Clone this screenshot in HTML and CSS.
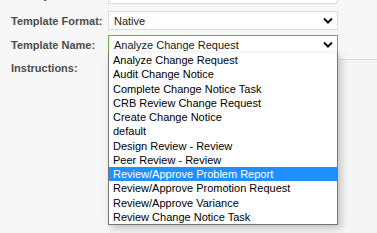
FILE: index.html
```html
<!DOCTYPE html>
<html lang="en">
<head>
    <meta charset="UTF-8">
    <meta name="viewport" content="width=device-width, initial-scale=1.0">
    <title>Template settings</title>
    <link rel="stylesheet" href="styles.css">
</head>
<body>

    <div class="form">
        <div class="row firstRow">
            <div class="label">Priority:</div>
            <div class="selectBox"></div>
        </div>

        <div class="row">
            <div class="label">Template Format:</div>
            <div class="selectBox">
                <span class="selectText">Native</span>
                <svg class="chevron" width="10" height="7" viewBox="0 0 10 7"><polyline points="1,1.5 5,5.5 9,1.5" fill="none" stroke="#111" stroke-width="2"/></svg>
            </div>
        </div>

        <div class="row">
            <div class="label">Template Name:</div>
            <div class="selectBox focused">
                <span class="selectText">Analyze Change Request</span>
                <svg class="chevron" width="10" height="7" viewBox="0 0 10 7"><polyline points="1,1.5 5,5.5 9,1.5" fill="none" stroke="#111" stroke-width="2"/></svg>
            </div>
        </div>

        <div class="row textRow">
            <div class="label instrLabel">Instructions:</div>
            <div class="textBox"></div>
        </div>
    </div>

    <!-- open dropdown of Template Name -->
    <div class="optionList">
        <div class="option">Analyze Change Request</div>
        <div class="option">Audit Change Notice</div>
        <div class="option">Complete Change Notice Task</div>
        <div class="option">CRB Review Change Request</div>
        <div class="option">Create Change Notice</div>
        <div class="option">default</div>
        <div class="option">Design Review - Review</div>
        <div class="option">Peer Review - Review</div>
        <div class="option selected">Review/Approve Problem Report</div>
        <div class="option">Review/Approve Promotion Request</div>
        <div class="option">Review/Approve Variance</div>
        <div class="option">Review Change Notice Task</div>
    </div>

</body>
</html>
```

FILE: styles.css
```css
body {
    font-family: "Liberation Sans", Arial, sans-serif;
    margin: 0;
    background: #f7f7f7;
    overflow: hidden;
    height: 100vh;
    position: relative;
}
.form {
    margin-top: -15px;
    padding-left: 11px;
}
.row {
    display: flex;
    align-items: center;
    margin-bottom: 5px;
}
.firstRow {
    margin-bottom: 7px;
}
.label {
    width: 97px;
    font-size: 11px;
    font-weight: bold;
    color: #4d4d4d;
}
.selectBox {
    width: 230px;
    height: 19px;
    box-sizing: border-box;
    border: 1px solid #dcdcdc;
    background: #fff;
    display: flex;
    align-items: center;
    justify-content: space-between;
    padding: 0 4px 0 5px;
}
.selectBox.focused {
    border-color: #6aae4a;
}
.selectText {
    font-size: 11px;
    color: #1a1a1a;
}
.chevron {
    display: block;
}
.textRow {
    align-items: flex-start;
}
.instrLabel {
    padding-top: 3px;
}
.textBox {
    flex: 1;
    height: 200px;
    margin-right: -40px;
    border-top: 1px solid #dcdcdc;
    background: #f5f5f5;
}
.optionList {
    position: absolute;
    left: 108px;
    top: 53px;
    width: 230px;
    box-sizing: border-box;
    border: 1px solid #767676;
    border-top: none;
    background: #fff;
    box-shadow: 3px 3px 8px rgba(0, 0, 0, 0.22);
}
.option {
    height: 14.25px;
    line-height: 14.25px;
    padding-left: 4px;
    font-size: 11px;
    color: #000;
    white-space: nowrap;
    overflow: hidden;
}
.option.selected {
    background: #1e90ff;
    color: #fff;
}
```
